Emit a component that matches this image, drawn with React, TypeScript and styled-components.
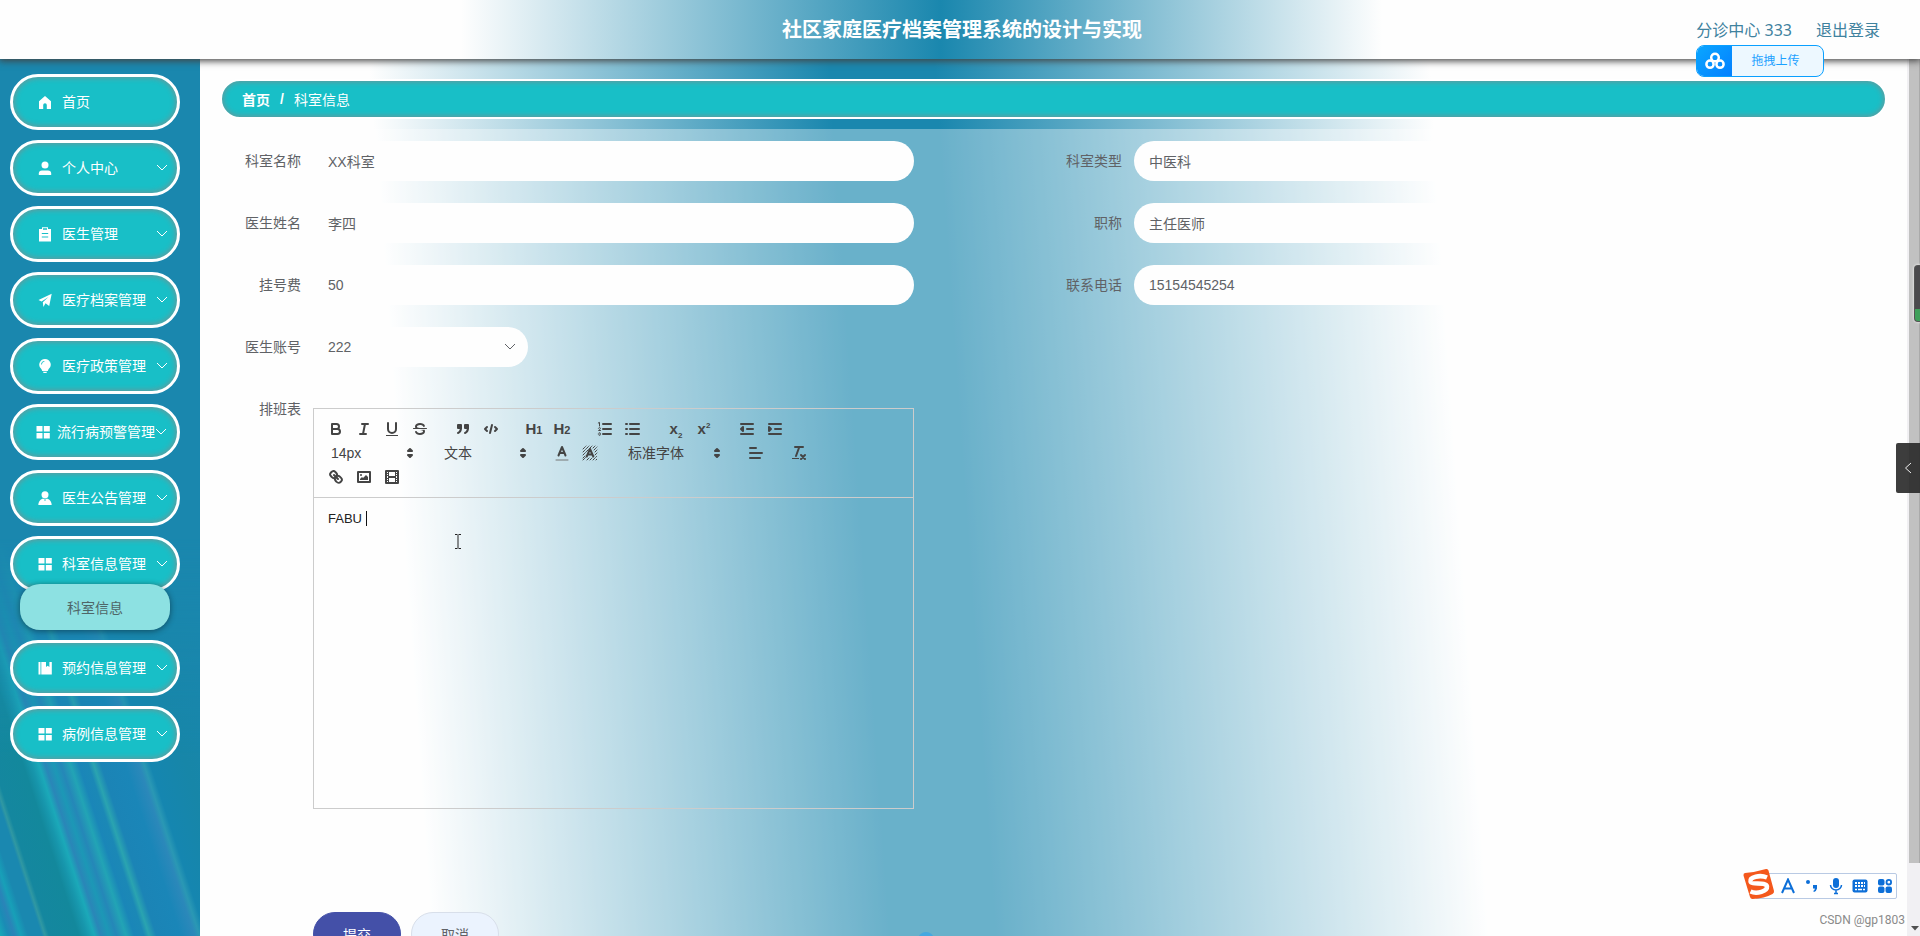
import React, { useState } from "react";
import styled, { createGlobalStyle } from "styled-components";

const sans = '"Liberation Sans", "Noto Sans CJK SC", sans-serif';
const cjk = '"Noto Sans", "Noto Sans CJK SC", sans-serif';
const deep = "#1a87ae";
const teal = "#18bfc7";

const GlobalStyle = createGlobalStyle`
  *, *::before, *::after { box-sizing: border-box; }
  body { margin: 0; background: #fdfdfd; font-family: ${sans}; font-size: 14px; color: #606266; }
  button, input, select, textarea { font: inherit; color: inherit; margin: 0; }
  button { cursor: pointer; }
`;

const Page = styled.div`
  position: relative;
  display: flex;
  flex-direction: column;
  height: 100vh;
  overflow: hidden;
`;

const Header = styled.header`
  position: relative;
  z-index: 2;
  display: grid;
  grid-template-columns: 1fr auto 1fr;
  align-items: center;
  flex: none;
  height: 59px;
  padding: 0 40px 0 44px;
  background: linear-gradient(90deg, #fefefe 24%, ${deep} 49%, #fefefe 72%);
  box-shadow: 0 1px 7px 1px #444;
  font-family: ${cjk};
`;

const Title = styled.h1`
  grid-column: 2;
  margin: 0;
  font-size: 20px;
  line-height: 28px;
  font-weight: 700;
  color: #fff;
`;

const Account = styled.div`
  display: flex;
  justify-content: flex-end;
  gap: 24px;
  font-size: 16px;
  line-height: 24px;
  color: #3f829e;
`;

const Logout = styled.a`
  color: inherit;
  text-decoration: none;
`;

const Body = styled.div`
  display: flex;
  flex: 1;
  min-height: 0;
`;

const Sidebar = styled.nav`
  position: relative;
  flex: none;
  width: 200px;
  padding: 15px 20px 15px 10px;
  background: ${deep};
  &::before {
    content: "";
    position: absolute;
    inset: 480px 0 0 0;
    background: linear-gradient(72deg,
      #17aab8 0, #1a8cb5 8px, #2a84b8 14px, #17a0b8 20px, #1a88b0 27px, #1a88b0 40px,
      #3098a2 43px, #14879f 47px, #13889c 75px, #1796ac 83px, #1ba9b9 90px, #2a86b8 96px,
      #1c98b6 104px, #2587b8 111px, #22a4b5 120px, #1a86b8 128px, #1b88b6 137px, #2aa4b0 142px,
      #1b84b6 149px, #1a86b8 172px, #2b88ba 185px, #2a98b4 190px, #1586b0 196px, #1786a8 230px, ${deep} 100%);
    mask-image: linear-gradient(180deg, transparent, #000 55%);
  }
`;

const MenuList = styled.ul`
  position: relative;
  display: flex;
  flex-direction: column;
  gap: 10px;
  margin: 0;
  padding: 0;
  list-style: none;
`;

const MenuButton = styled.button<{ $tight?: boolean }>`
  display: flex;
  align-items: center;
  gap: ${(p) => (p.$tight ? 7 : 10)}px;
  width: 100%;
  height: 56px;
  padding: 0 9px 0 ${(p) => (p.$tight ? 23 : 25)}px;
  border: 3px solid #fff;
  border-radius: 28px;
  background: ${teal};
  box-shadow: inset 0 0 6px #888;
  color: #fff;
  line-height: 20px;
  text-align: left;
  white-space: nowrap;
  svg { flex: none; }
`;

const MenuArrow = styled.svg`
  margin-left: auto;
`;

const TightArrow = styled(MenuArrow)`
  margin-left: -7px;
`;

const SubItem = styled.a`
  position: relative;
  display: flex;
  align-items: center;
  justify-content: center;
  height: 46px;
  margin: -8px 10px 0;
  border-radius: 20px;
  background: #8de1e2;
  box-shadow: 0 1px 6px rgba(0, 0, 0, 0.45);
  color: #4f6668;
  text-decoration: none;
`;

const Main = styled.main`
  position: relative;
  display: flex;
  flex-direction: column;
  flex: 1;
  min-width: 0;
  overflow: hidden;
  background: linear-gradient(86deg, #fefefe 13%, ${deep} 39%, ${deep} 45%, #fefefe 73%);
`;

const Breadcrumb = styled.nav`
  display: flex;
  align-items: center;
  flex: none;
  gap: 10px;
  height: 40px;
  margin: 20px 20px 10px;
  padding: 0 20px;
  border: 2px solid #fff;
  border-radius: 20px;
  background: ${teal};
  box-shadow: inset 0 0 6px #888;
  color: #fff;
`;

const CrumbLink = styled.a`
  color: inherit;
  font-weight: 700;
  text-decoration: none;
`;

const Form = styled.form`
  flex: 1 0 auto;
  padding: 12px 52px 40px 13px;
  background: rgba(255, 255, 255, 0.35);
`;

const Grid = styled.div`
  display: grid;
  grid-template-columns: 1fr 1fr;
  row-gap: 22px;
`;

const Field = styled.div<{ $top?: boolean }>`
  display: flex;
  align-items: flex-start;
  grid-column: ${(p) => (p.$top ? "1" : "auto")};
  padding-right: 120px;
`;

const Label = styled.label`
  flex: none;
  width: 100px;
  padding-right: 12px;
  line-height: 40px;
  text-align: right;
`;

const TextInput = styled.input`
  flex: 1;
  min-width: 0;
  height: 40px;
  padding: 0 15px;
  border: 0;
  border-radius: 20px;
  background: #fefefe;
  outline: none;
`;

const SelectWrap = styled.div`
  position: relative;
  width: 215px;
  svg { position: absolute; right: 12px; top: 14px; pointer-events: none; }
`;

const Select = styled.select`
  width: 100%;
  height: 40px;
  padding: 0 30px 0 15px;
  border: 0;
  border-radius: 20px;
  background: #fefefe;
  appearance: none;
  outline: none;
`;

const Editor = styled.div`
  flex: 1;
  min-width: 0;
  margin-top: 19px;
  border: 1px solid #ccc;
`;

const Toolbar = styled.div`
  display: flex;
  flex-wrap: wrap;
  padding: 8px 0 8px 8px;
  border-bottom: 1px solid #ccc;
`;

const ToolGroup = styled.span`
  display: flex;
  margin-right: 15px;
`;

const ToolButton = styled.button`
  display: block;
  width: 28px;
  height: 24px;
  padding: 3px 5px;
  border: 0;
  background: none;
  color: #444;
  svg { display: block; width: 18px; height: 18px; overflow: visible; }
`;

const GlyphButton = styled(ToolButton)`
  padding: 0;
  font-size: 15px;
  line-height: 24px;
  font-weight: 700;
  white-space: nowrap;
  sub, sup { font-size: 8px; line-height: 0; }
`;

const HeadingMark = styled.small`
  font-size: 11px;
`;

const Picker = styled.span<{ $wide?: boolean }>`
  position: relative;
  width: ${(p) => (p.$wide ? 108 : 98)}px;
  height: 24px;
  color: #444;
  select {
    width: 100%;
    height: 24px;
    padding: 0 20px 0 9px;
    border: 0;
    background: none;
    appearance: none;
    outline: none;
  }
  svg { position: absolute; right: 1px; top: 3px; width: 18px; height: 18px; pointer-events: none; }
`;

const Writing = styled.div`
  position: relative;
  height: 310px;
`;

const EditorText = styled.textarea`
  display: block;
  width: 100%;
  height: 100%;
  padding: 12px 14px;
  border: 0;
  background: none;
  color: #222;
  font-size: 13px;
  line-height: 18px;
  outline: none;
  resize: none;
`;

const Caret = styled.span`
  position: absolute;
  left: 52px;
  top: 13px;
  width: 1px;
  height: 15px;
  background: #111;
`;

const Pointer = styled.svg`
  position: absolute;
  left: 140px;
  top: 35px;
`;

const Actions = styled.div`
  display: flex;
  gap: 10px;
  padding: 103px 0 0 100px;
`;

const Action = styled.button<{ $primary?: boolean }>`
  width: 88px;
  height: 44px;
  border: 1px solid ${(p) => (p.$primary ? "#4450a8" : "#d8dfea")};
  border-radius: 22px;
  background: ${(p) => (p.$primary ? "#4450a8" : "#ebf3fe")};
  color: ${(p) => (p.$primary ? "#fff" : "#606266")};
`;

const Scrollbar = styled.div`
  position: relative;
  display: flex;
  flex-direction: column;
  align-items: flex-end;
  flex: none;
  width: 13px;
  padding-bottom: 73px;
  background: #f1f0f3;
  svg { position: absolute; right: 1px; bottom: 5px; }
`;

const Thumb = styled.div`
  flex: 1;
  width: 11px;
  border-right: 1px solid #aaa;
  background: #c1c1c1;
`;

const Upload = styled.button`
  position: absolute;
  z-index: 3;
  top: 45px;
  right: 96px;
  display: flex;
  width: 128px;
  height: 32px;
  padding: 0;
  overflow: hidden;
  border: 1px solid #0aa0ff;
  border-radius: 8px;
  background: #edf8ff;
  color: #1ba1ff;
  font-size: 12px;
  line-height: 30px;
`;

const UploadMark = styled.span`
  display: flex;
  align-items: center;
  justify-content: center;
  width: 35px;
  height: 30px;
  background: linear-gradient(135deg, #0aa6ff, #0480ff);
`;

const UploadText = styled.span`
  flex: 1;
  padding-right: 4px;
`;

const Meter = styled.div`
  position: absolute;
  z-index: 3;
  top: 265px;
  right: 0;
  width: 6px;
  height: 57px;
  border: 1px solid #555;
  border-right: 0;
  border-radius: 4px 0 0 4px;
  background: linear-gradient(180deg, #4b4a4d 43px, #3fa05a 43px);
  box-shadow: 0 0 2px 1px #ddd;
`;

const Drawer = styled.button`
  position: absolute;
  z-index: 3;
  top: 443px;
  right: 0;
  display: flex;
  align-items: center;
  justify-content: center;
  width: 24px;
  height: 50px;
  padding: 0;
  border: 0;
  border-radius: 2px 0 0 2px;
  background: rgba(40, 40, 40, 0.9);
`;

const InputBar = styled.div`
  position: absolute;
  z-index: 3;
  right: 23px;
  bottom: 37px;
  display: flex;
  align-items: center;
  justify-content: space-between;
  width: 142px;
  height: 26px;
  padding: 0 4px 0 25px;
  border: 1px solid #b9cae4;
  border-radius: 2px;
  background: #fff;
`;

const InputLogo = styled.svg`
  position: absolute;
  left: -14px;
  top: -6px;
`;

const Watermark = styled.span`
  position: absolute;
  z-index: 3;
  right: 15px;
  bottom: 7px;
  color: #8a8a8a;
  font-family: Roboto, sans-serif;
  font-size: 12px;
  line-height: 18px;
`;

const Bubble = styled.span`
  position: absolute;
  left: 918px;
  bottom: -12px;
  width: 16px;
  height: 16px;
  border-radius: 50%;
  background: #45a8e0;
`;

const menuIcons: Record<string, React.ReactNode> = {
  home: <path d="M7 1 1 6.200V14h4.200v-4a1.800 1.800 0 0 1 3.600 0v4H13V6.200z" />,
  user: <><circle cx="7" cy="4" r="3.500" /><path d="M.8 14v-1.500C.8 10.500 2 9.500 4 9.500h6c2 0 3.200 1 3.200 3V14z" /></>,
  clip: <path fillRule="evenodd" d="M1 2h3V.3h6V2h3v12.500H1zM5 1.300v1.400h4V1.300zM3.800 6v1h6.400V6zm0 3.500v1h6.400v-1z" />,
  plane: <path d="M.5 7 13.700.8 11.200 13 7.500 10.300 5.400 14 4.800 9.300 10.500 4 3.500 8.400z" />,
  bulb: <><path fillRule="evenodd" d="M7 0a5.700 5.700 0 0 1 3.500 10.200L9.800 12H4.200l-.7-1.800A5.700 5.700 0 0 1 7 0zM3 5.500h.8A3.300 3.300 0 0 1 6.500 2.600v-.7A4 4 0 0 0 3 5.500z" /><path d="M5 12.700h4L8.500 14h-3z" /></>,
  grid: <path d="M.5 1h6v5.500h-6zM7.800 1h6v5.500h-6zM.5 7.900h6v5.500h-6zM7.800 7.900h6v5.500h-6z" />,
  doctor: <><circle cx="7" cy="3.700" r="3.500" /><path fillRule="evenodd" d="M.3 14c0-3 1.500-5 4-6.200h5.400c2.500 1.200 4 3.200 4 6.200zM6 8.500l1 1.800 1-1.800z" /></>,
  book: <path d="M.5 1h2v12.500h-2zM3.300 1H8v5l1.700-1.300L11.400 6V1h2.400v12.500H3.300z" />,
};

const menu = [
  { icon: "home", text: "首页" },
  { icon: "user", text: "个人中心" },
  { icon: "clip", text: "医生管理" },
  { icon: "plane", text: "医疗档案管理" },
  { icon: "bulb", text: "医疗政策管理" },
  { icon: "grid", text: "流行病预警管理" },
  { icon: "doctor", text: "医生公告管理" },
  { icon: "grid", text: "科室信息管理", child: "科室信息" },
  { icon: "book", text: "预约信息管理" },
  { icon: "grid", text: "病例信息管理" },
];

const fields = [
  { id: "name", label: "科室名称", value: "XX科室" },
  { id: "type", label: "科室类型", value: "中医科" },
  { id: "doctor", label: "医生姓名", value: "李四" },
  { id: "rank", label: "职称", value: "主任医师" },
  { id: "fee", label: "挂号费", value: "50" },
  { id: "phone", label: "联系电话", value: "15154545254" },
];

const thin = { strokeWidth: 1 };
const solid = { fill: "#444", stroke: "none" };

const tools: Record<string, React.ReactNode> = {
  bold: <><path d="M5 4h4.500a2.500 2.500 0 0 1 0 5H5z" /><path d="M5 9h5.500a2.500 2.500 0 0 1 0 5H5z" /></>,
  italic: <path d="M7 4h6M5 14h6M8 14 10 4" />,
  underline: <><path d="M5 3v6a4 4 0 0 0 8 0V3" /><rect {...solid} x="3" y="15" width="12" height="1" /></>,
  strike: <><path {...thin} d="M2.500 8.500h13" /><path {...solid} d="M9 8C6.500 7.800 6 7.500 6 6.500 6 5.800 7.300 5 9 5c1.600 0 2.800.7 3 1.300a1 1 0 0 0 1.900-.6C13.400 4.100 11.400 3 9 3 6.200 3 4 4.500 4 6.500c0 .7.200 1.300.5 1.800zM9 10c2.500.2 3 .5 3 1.500 0 .7-1.300 1.500-3 1.500-1.600 0-2.800-.7-3-1.300a1 1 0 1 0-1.900.6C4.600 13.900 6.600 15 9 15c2.800 0 5-1.500 5-3.500 0-.7-.2-1.300-.5-1.800z" /></>,
  quote: <g fill="#444"><rect x="4" y="5" width="3" height="3" /><rect x="11" y="5" width="3" height="3" /><path d="M7 8c0 4-3 5-3 5M14 8c0 4-3 5-3 5" /></g>,
  code: <path d="M5 7 3 9l2 2M13 7l2 2-2 2M10 5 8 13" />,
  ordered: <><path d="M7 4h8M7 9h8M7 14h8" /><path {...thin} d="M2.300 3l1.200-.6V6M2.500 8.200c.3-1 1.900-.8 1.900.1 0 1.100-1.900 2-1.900 2.200h2M2.500 13.200c.4-.8 1.900-.7 1.900.1 0 .5-.3.7-.7.7.5 0 .7.300.7.700 0 .9-1.500 1-1.900.1" /></>,
  bullet: <path d="M6 4h9M6 9h9M6 14h9M2 4h1M2 9h1M2 14h1" />,
  outdent: <path d="M3 14h12M3 4h12M9 9h6M5 7v4L3 9z" />,
  indent: <path d="M3 14h12M3 4h12M9 9h6M3 7v4l2-2z" />,
  color: <><path stroke="#777" d="M3 16h12" strokeWidth="1" /><path d="M5.500 11.500 9 3l3.500 8.500M6.400 9h5.200" /></>,
  back: <><path strokeWidth="1" strokeDasharray="1 1" d="M2 5 5 2M2 8l6-6M2 11l9-9M2 14l2-2M12 4l2-2M2 16l3-3M13 6l3-3M14 8l2-2M14 11l2-2M6 16l2-2M9 16l2-2M12 16l4-4M15 16l1-1" /><path d="M5.700 12.500 9 5l3.300 7.500M6.600 10.500h4.800" /></>,
  align: <path d="M3 9h12M3 14h10M3 4h6" />,
  clean: <><path d="M5 3h8M6 12l3.300-9M11 11l4 4M15 11l-4 4" /><rect {...solid} x="2" y="14" width="7" height="1" /></>,
  link: <><path d="M7 7l4 4" /><path d="M8.900 4.600a3.500 3.500 0 0 1 .4 4.700 3.500 3.500 0 0 1-4.700-.4C3.200 7.500 2 6.400 4.200 4.200S7.500 3.200 8.900 4.600zM13.400 9.100a3.500 3.500 0 0 0-4.700-.4 3.500 3.500 0 0 0 .4 4.700c1.400 1.400 2.500 2.500 4.700.4s1-3.300-.4-4.700z" /></>,
  image: <><rect x="3" y="4" width="12" height="10" /><circle {...solid} cx="6" cy="7" r="1" /><path {...solid} d="M5 12v-1l2-2 1 1 3-3 2 2v3z" /></>,
  video: <><rect x="3" y="3" width="12" height="12" /><path {...solid} d="M5 3h1v12H5zM12 3h1v12h-1zM5 8h8v2H5zM3 5h3v1H3zM3 7h3v1H3zM3 10h3v1H3zM3 12h3v1H3zM12 5h3v1h-3zM12 7h3v1h-3zM12 10h3v1h-3zM12 12h3v1h-3z" /></>,
};

const Tool = ({ name }: { name: string }) => (
  <ToolButton type="button" aria-label={name}>
    <svg viewBox="0 0 18 18" fill="none" stroke="#444" strokeWidth="2" strokeLinecap="round" strokeLinejoin="round">{tools[name]}</svg>
  </ToolButton>
);

const ToolPicker = ({ label, value, wide }: { label: string; value: string; wide?: boolean }) => (
  <ToolGroup>
    <Picker $wide={wide}>
      <select aria-label={label}><option>{value}</option></select>
      <svg viewBox="0 0 18 18" fill="#444" stroke="#444" strokeWidth="2" strokeLinejoin="round"><path d="M7 11l2 2 2-2zM7 7l2-2 2 2z" /></svg>
    </Picker>
  </ToolGroup>
);

const chevron = <path d="M1 3l5 5 5-5" fill="none" stroke="currentColor" strokeWidth="1" />;

export default function App() {
  const [values, setValues] = useState<Record<string, string>>(
    Object.fromEntries(fields.map((f) => [f.id, f.value]))
  );
  const [schedule, setSchedule] = useState("FABU");

  return (
    <Page>
      <GlobalStyle />
      <Header>
        <Title>社区家庭医疗档案管理系统的设计与实现</Title>
        <Account>
          <span>分诊中心 333</span>
          <Logout href="#logout">退出登录</Logout>
        </Account>
      </Header>
      <Body>
        <Sidebar>
          <MenuList>
            {menu.map((m, i) => {
              const tight = m.text.length > 6;
              const Arrow = tight ? TightArrow : MenuArrow;
              return (
                <li key={m.text}>
                  <MenuButton type="button" $tight={tight}>
                    <svg width="14" height="15" viewBox="0 0 14 15" fill="#fff">{menuIcons[m.icon]}</svg>
                    {m.text}
                    {i > 0 && <Arrow width="12" height="12" viewBox="0 0 12 12">{chevron}</Arrow>}
                  </MenuButton>
                  {m.child && <SubItem href="#department">{m.child}</SubItem>}
                </li>
              );
            })}
          </MenuList>
        </Sidebar>
        <Main>
          <Breadcrumb>
            <CrumbLink href="#home">首页</CrumbLink>
            <b>/</b>
            <span>科室信息</span>
          </Breadcrumb>
          <Form onSubmit={(e) => e.preventDefault()}>
            <Grid>
              {fields.map((f) => (
                <Field key={f.id}>
                  <Label htmlFor={f.id}>{f.label}</Label>
                  <TextInput id={f.id} value={values[f.id]} onChange={(e) => setValues({ ...values, [f.id]: e.target.value })} />
                </Field>
              ))}
              <Field $top>
                <Label htmlFor="account">医生账号</Label>
                <SelectWrap>
                  <Select id="account"><option>222</option></Select>
                  <svg width="12" height="12" viewBox="0 0 12 12">{chevron}</svg>
                </SelectWrap>
              </Field>
              <Field $top>
                <Label htmlFor="schedule">排班表</Label>
                <Editor>
                  <Toolbar>
                    <ToolGroup><Tool name="bold" /><Tool name="italic" /><Tool name="underline" /><Tool name="strike" /></ToolGroup>
                    <ToolGroup><Tool name="quote" /><Tool name="code" /></ToolGroup>
                    <ToolGroup>
                      <GlyphButton type="button">H<HeadingMark>1</HeadingMark></GlyphButton>
                      <GlyphButton type="button">H<HeadingMark>2</HeadingMark></GlyphButton>
                    </ToolGroup>
                    <ToolGroup><Tool name="ordered" /><Tool name="bullet" /></ToolGroup>
                    <ToolGroup>
                      <GlyphButton type="button">x<sub>2</sub></GlyphButton>
                      <GlyphButton type="button">x<sup>2</sup></GlyphButton>
                    </ToolGroup>
                    <ToolGroup><Tool name="outdent" /><Tool name="indent" /></ToolGroup>
                    <ToolPicker label="字号" value="14px" />
                    <ToolPicker label="标题" value="文本" />
                    <ToolGroup><Tool name="color" /><Tool name="back" /></ToolGroup>
                    <ToolPicker label="字体" value="标准字体" wide />
                    <ToolGroup><Tool name="align" /></ToolGroup>
                    <ToolGroup><Tool name="clean" /></ToolGroup>
                    <ToolGroup><Tool name="link" /><Tool name="image" /><Tool name="video" /></ToolGroup>
                  </Toolbar>
                  <Writing>
                    <EditorText id="schedule" spellCheck={false} value={schedule} onChange={(e) => setSchedule(e.target.value)} />
                    <Caret />
                    <Pointer width="8" height="17" viewBox="0 0 8 17" fill="none" stroke="#222" strokeWidth="1">
                      <path d="M1 1.500h2.500M4.500 1.500H7M4 2v13M1 15.500h2.500M4.500 15.500H7" />
                    </Pointer>
                  </Writing>
                </Editor>
              </Field>
            </Grid>
            <Actions>
              <Action type="submit" $primary>提交</Action>
              <Action type="button">取消</Action>
            </Actions>
          </Form>
        </Main>
        <Scrollbar>
          <Thumb />
          <svg width="8" height="5" viewBox="0 0 8 5"><path d="M0 0h8L4 4.500z" fill="#505050" /></svg>
        </Scrollbar>
      </Body>
      <Upload type="button">
        <UploadMark>
          <svg width="22" height="18" viewBox="0 0 22 18" fill="none" stroke="#fff" strokeWidth="2.500">
            <circle cx="11" cy="5.500" r="3.800" /><circle cx="6" cy="12.200" r="3.600" /><circle cx="16" cy="12.200" r="3.600" />
          </svg>
        </UploadMark>
        <UploadText>拖拽上传</UploadText>
      </Upload>
      <Meter />
      <Drawer type="button" aria-label="展开">
        <svg width="8" height="12" viewBox="0 0 8 12" fill="none" stroke="#eee" strokeWidth="1"><path d="M7 1 1.500 6 7 11" /></svg>
      </Drawer>
      <InputBar>
        <InputLogo width="33" height="32" viewBox="0 0 33 32">
          <path d="M3 5Q14 4 24 1q2-.4 2.500 1.500L32 23q.3 2-1.500 3-8 4.500-20 5-2 0-2.500-2L1.500 7.500Q1.200 5.400 3 5z" fill="#f4581c" />
          <path d="M25 9.500C18 6.500 7.500 9 8.500 13.500 9.500 17.500 24 13 25 18.500 25.500 23 15 26.500 8.500 23.500" fill="none" stroke="#fff" strokeWidth="4.500" />
        </InputLogo>
        <svg width="14" height="16" viewBox="0 0 14 16" fill="none" stroke="#0d6fd8" strokeWidth="2"><path d="M1 15 7 1.500 13 15M3 10.500h8" /></svg>
        <svg width="14" height="16" viewBox="0 0 14 16" fill="#0d6fd8"><circle cx="3" cy="4" r="2" /><path d="M8 7h4v3.500Q11.500 13 9 14l-.8-1q1.800-1 1.600-2.500H8z" /></svg>
        <svg width="14" height="18" viewBox="0 0 14 18" fill="#0d6fd8"><rect x="4" y="1" width="6" height="10" rx="3" /><path d="M1.500 8a5.500 5 0 0 0 11 0M7 13v4M5 16.500h4" fill="none" stroke="#0d6fd8" strokeWidth="1.500" /></svg>
        <svg width="16" height="14" viewBox="0 0 16 14"><rect x=".5" y=".5" width="15" height="13" rx="2" fill="#0d6fd8" /><path d="M3 4h10M3 7h10" stroke="#fff" strokeWidth="2" strokeDasharray="2 1" /><path d="M3 10.500h2M6 10.500h4M11 10.500h2" stroke="#fff" strokeWidth="1.500" /></svg>
        <svg width="14" height="14" viewBox="0 0 14 14" fill="#0d6fd8"><rect width="6.500" height="6.500" rx="2" /><rect y="7.500" width="6.500" height="6.500" rx="2" /><rect x="7.500" y="7.500" width="6.500" height="6.500" rx="2" /><circle cx="10.800" cy="3.200" r="2.300" fill="none" stroke="#0d6fd8" strokeWidth="1.800" /></svg>
      </InputBar>
      <Watermark>CSDN @gp1803</Watermark>
      <Bubble />
    </Page>
  );
}
